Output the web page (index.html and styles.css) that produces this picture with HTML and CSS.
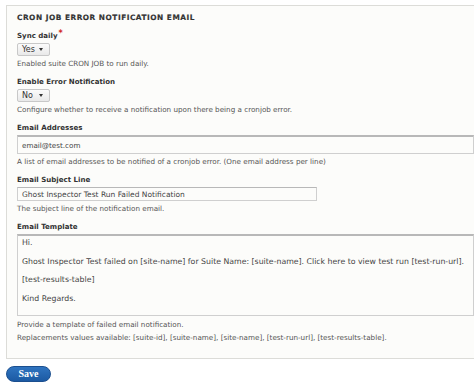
FILE: index.html
```html
<!DOCTYPE html>
<html>
<head>
<meta charset="utf-8">
<link rel="stylesheet" href="styles.css">
</head>
<body>
<div class="panel">
  <div class="legend">CRON JOB ERROR NOTIFICATION EMAIL</div>

  <div class="item">
    <div class="label">Sync daily<span class="req">*</span></div>
    <div class="select"><span class="val">Yes</span><span class="caret"></span></div>
    <div class="help">Enabled suite CRON JOB to run daily.</div>
  </div>

  <div class="item">
    <div class="label">Enable Error Notification</div>
    <div class="select"><span class="val">No</span><span class="caret"></span></div>
    <div class="help">Configure whether to receive a notification upon there being a cronjob error.</div>
  </div>

  <div class="item">
    <div class="label">Email Addresses</div>
    <input class="text wide" type="text" value="email@test.com">
    <div class="help">A list of email addresses to be notified of a cronjob error. (One email address per line)</div>
  </div>

  <div class="item">
    <div class="label">Email Subject Line</div>
    <input class="text subject" type="text" value="Ghost Inspector Test Run Failed Notification">
    <div class="help">The subject line of the notification email.</div>
  </div>

  <div class="item">
    <div class="label">Email Template</div>
    <textarea class="area">Hi.

Ghost Inspector Test failed on [site-name] for Suite Name: [suite-name]. Click here to view test run [test-run-url].

[test-results-table]

Kind Regards.</textarea>
    <div class="help">Provide a template of failed email notification.<br>Replacements values available: [suite-id], [suite-name], [site-name], [test-run-url], [test-results-table].</div>
  </div>
</div>
<div class="actions">
  <button class="save" type="button">Save</button>
</div>
</body>
</html>
```

FILE: styles.css
```css
html, body {
  margin: 0;
  padding: 0;
  background: #ffffff;
}
body {
  font-family: "DejaVu Sans", "Liberation Sans", sans-serif;
  font-size: 7.2px;
  color: #333;
  width: 474px;
  height: 389px;
  overflow: hidden;
}
.panel {
  margin: 5px 0 0 6px;
  width: 468px;
  box-sizing: border-box;
  border: 1px solid #dcdcd8;
  border-right: none;
  background: #fcfcfa;
  padding: 6px 0 14px 10px;
}
.legend {
  line-height: 12px;
  font-size: 7.4px;
  letter-spacing: 0.5px;
  color: #333;
  font-weight: 600;
  -webkit-text-stroke: 0.15px #333;
  margin-bottom: 6px;
}
.item {
  margin-bottom: 6px;
}
.item:last-child {
  margin-bottom: 0;
}
.label {
  font-weight: bold;
  font-size: 7.05px;
  line-height: 12px;
  color: #333;
  margin-bottom: 1px;
}
.req {
  color: #d0281f;
  font-size: 8px;
  margin-left: 1px;
  position: relative;
  top: -2px;
}
.select {
  display: flex;
  align-items: center;
  width: 33px;
  height: 13px;
  box-sizing: border-box;
  border: 1px solid #c8c8c8;
  border-radius: 2px;
  background: linear-gradient(#fbfbfb, #e9e9e9);
  padding-left: 4px;
  font-size: 8px;
  color: #333;
}
.select .val {
  flex: 1;
}
.caret {
  width: 0;
  height: 0;
  border-left: 2.5px solid transparent;
  border-right: 2.5px solid transparent;
  border-top: 3px solid #333;
  margin-right: 6px;
}
.help {
  margin-top: 2px;
  line-height: 12px;
  color: #555;
}
input.text, textarea.area {
  display: block;
  font-family: "DejaVu Sans", "Liberation Sans", sans-serif;
  font-size: 7.2px;
  color: #444;
  background: #fcfcfa;
  box-sizing: border-box;
  border: 1px solid #cfcfcf;
  border-top-color: #b8b8b8;
  margin: 0;
  outline: none;
}
input.wide {
  width: 457px;
  height: 19px;
  padding: 0 4px;
  border-top-width: 2px;
}
input.subject {
  width: 300px;
  height: 14px;
  padding: 0 4px;
  font-size: 7.5px;
}
textarea.area {
  width: 457px;
  height: 82px;
  padding: 2px 4px;
  font-size: 7.8px;
  line-height: 9.3px;
  white-space: pre;
  resize: none;
  overflow: hidden;
  border-top-width: 2px;
}
.item:last-child .help {
  line-height: 13px;
}
.actions {
  padding: 7px 0 0 6px;
}
.save {
  width: 45px;
  height: 16px;
  border: 1px solid #1b4f8f;
  border-radius: 9px;
  background: linear-gradient(#2f74c0, #1c5aa3);
  color: #fff;
  font-family: "Liberation Serif", "DejaVu Serif", serif;
  font-weight: bold;
  font-size: 10px;
  padding: 0;
  line-height: 14px;
}
```
